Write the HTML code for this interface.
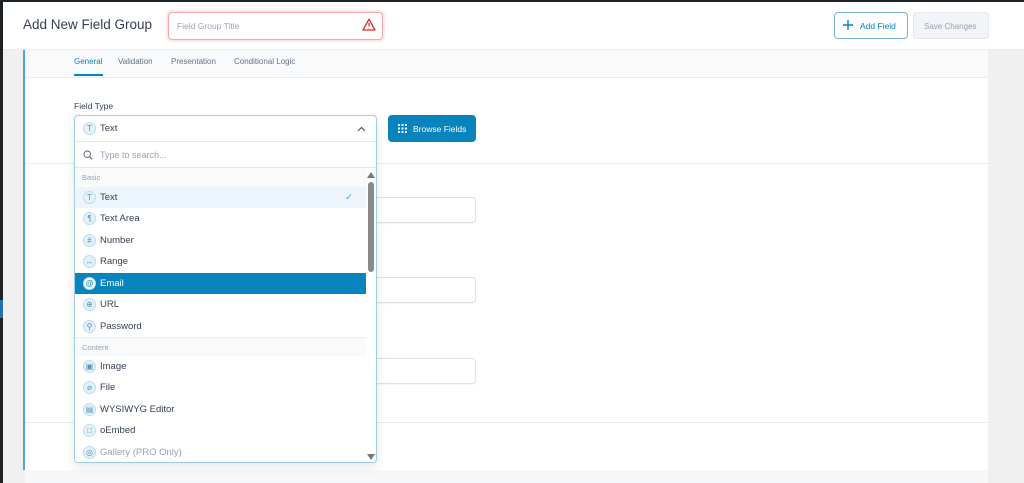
<!DOCTYPE html>
<html><head><style>
*{box-sizing:border-box;margin:0;padding:0}
body{width:1024px;height:483px;overflow:hidden;background:#f0f0f1;font-family:"Liberation Sans",sans-serif;position:relative;color:#344054}
.abs{position:absolute}
.ic{position:absolute;left:8px;top:4px;width:13px;height:13px;border-radius:50%;background:#e4f1f9;border:1px solid #bcdcee;font-size:8px;color:#5b8fb0;text-align:center;line-height:11px}
.row{position:absolute;left:0;width:291px;height:21px;font-size:9.5px;line-height:21px;padding-left:25px;color:#344054}
.lbl{position:absolute;left:0;width:291px;height:19px;font-size:7.5px;color:#98a2b3;padding-left:7px;line-height:19px;background:#f9fafb}
.inp{position:absolute;left:370px;width:106px;height:26px;border:1px solid #dde2e8;border-radius:4px;background:#fff;box-shadow:0 1px 1px rgba(0,0,0,.05)}
</style></head><body>
<div class="abs" style="left:0;top:0;width:1024px;height:2px;background:#1d2327"></div>
<div class="abs" style="left:0;top:0;width:3px;height:483px;background:#1d2327"></div>
<div class="abs" style="left:0;top:300px;width:3px;height:18px;background:#2271b1"></div>
<!-- header -->
<div class="abs" style="left:3px;top:2px;width:1021px;height:48px;background:#fff;border-bottom:1px solid #eaecf0"></div>
<div class="abs" style="left:23px;top:17px;font-size:13.5px;color:#344054;white-space:nowrap">Add New Field Group</div>
<div class="abs" style="left:168px;top:12px;width:215px;height:28px;border:1px solid #f0a8a8;border-radius:4px;box-shadow:0 0 0 2px #fde8e8;background:#fff"></div>
<div class="abs" style="left:177px;top:21px;font-size:8.5px;color:#98a2b3">Field Group Title</div>
<svg class="abs" style="left:362px;top:18px" width="14" height="13" viewBox="0 0 14 13"><path d="M7 1.2L13 12H1z" fill="none" stroke="#d92d20" stroke-width="1.3" stroke-linejoin="round"/><path d="M7 5v3.5M7 10v.4" stroke="#d92d20" stroke-width="1.3"/></svg>
<div class="abs" style="left:834px;top:12px;width:74px;height:27px;border:1px solid #74b3d6;border-radius:4px;background:#fff"></div>
<svg class="abs" style="left:843px;top:20px" width="10" height="10"><path d="M5 0v10M0 5h10" stroke="#0783be" stroke-width="1.4"/></svg>
<div class="abs" style="left:860px;top:21px;font-size:8.5px;color:#0783be">Add Field</div>
<div class="abs" style="left:913px;top:12px;width:76px;height:27px;border:1px solid #e4e7ec;border-radius:4px;background:#f2f4f7"></div>
<div class="abs" style="left:924px;top:22px;font-size:8px;color:#98a2b3">Save Changes</div>
<!-- panel -->
<div class="abs" style="left:23px;top:50px;width:2px;height:420px;background:#4fa4d8"></div>
<div class="abs" style="left:25px;top:50px;width:963px;height:420px;background:#fff"></div>
<div class="abs" style="left:25px;top:50px;width:963px;height:28px;background:#f9fafb;border-bottom:1px solid #eaecf0"></div>
<div class="abs" style="left:74px;top:57px;font-size:8px;color:#0783be">General</div>
<div class="abs" style="left:74px;top:74px;width:29px;height:2px;background:#0783be"></div>
<div class="abs" style="left:118px;top:57px;font-size:8px;color:#667085">Validation</div>
<div class="abs" style="left:171px;top:57px;font-size:8px;color:#667085">Presentation</div>
<div class="abs" style="left:234px;top:57px;font-size:8px;color:#667085">Conditional Logic</div>
<div class="abs" style="left:25px;top:163px;width:963px;height:1px;background:#eaecf0"></div>
<div class="abs" style="left:25px;top:422px;width:963px;height:1px;background:#eaecf0"></div>
<div class="abs" style="left:25px;top:470px;width:963px;height:13px;background:#f6f7f8"></div>
<div class="abs" style="left:74px;top:101px;font-size:8.5px;color:#344054">Field Type</div>
<div class="inp" style="top:197px"></div>
<div class="inp" style="top:277px"></div>
<div class="inp" style="top:358px"></div>
<div class="abs" style="left:388px;top:115px;width:88px;height:27px;background:#0783be;border-radius:4px"></div>
<svg class="abs" style="left:398px;top:124px" width="9" height="9"><g fill="#fff"><rect x="0" y="0" width="2" height="2"/><rect x="3.5" y="0" width="2" height="2"/><rect x="7" y="0" width="2" height="2"/><rect x="0" y="3.5" width="2" height="2"/><rect x="3.5" y="3.5" width="2" height="2"/><rect x="7" y="3.5" width="2" height="2"/><rect x="0" y="7" width="2" height="2"/><rect x="3.5" y="7" width="2" height="2"/><rect x="7" y="7" width="2" height="2"/></g></svg>
<div class="abs" style="left:413px;top:124px;font-size:8.5px;color:#fff">Browse Fields</div>
<!-- dropdown -->
<div class="abs" style="left:74px;top:115px;width:303px;height:348px;background:#fff;border:1px solid #9fcde6;border-radius:4px;box-shadow:0 4px 10px rgba(0,0,0,.1);overflow:hidden">
 <div class="abs" style="left:0;top:0;width:301px;height:26px;border-bottom:1px solid #dbe9f2">
  <div class="ic" style="top:6px">T</div>
  <div class="abs" style="left:25px;top:7px;font-size:9.5px">Text</div>
  <svg class="abs" style="left:282px;top:10px" width="9" height="6"><path d="M1 5L4.5 1.5L8 5" fill="none" stroke="#555" stroke-width="1.2"/></svg>
 </div>
 <div class="abs" style="left:0;top:26px;width:301px;height:26px;border-bottom:1px solid #e4e7ec">
  <svg class="abs" style="left:8px;top:8px" width="10" height="10"><circle cx="4.2" cy="4.2" r="3.3" fill="none" stroke="#667085" stroke-width="1.1"/><path d="M6.6 6.6L9.3 9.3" stroke="#667085" stroke-width="1.1"/></svg>
  <div class="abs" style="left:25px;top:8px;font-size:9px;color:#98a2b3">Type to search...</div>
 </div>
 <div class="abs" style="left:0;top:52px;width:301px;height:296px">
  <div class="lbl" style="top:0">Basic</div>
  <div class="row" style="top:19px;background:#ebf5fb"><div class="ic">T</div>Text<span style="position:absolute;left:270px;color:#4fa4d8">✓</span></div>
  <div class="row" style="top:40px"><div class="ic">¶</div>Text Area</div>
  <div class="row" style="top:62px"><div class="ic">#</div>Number</div>
  <div class="row" style="top:83px"><div class="ic">↔</div>Range</div>
  <div class="row" style="top:105px;background:#0783be;color:#fff"><div class="ic" style="background:#fff;color:#0783be">@</div>Email</div>
  <div class="row" style="top:126px"><div class="ic">⊕</div>URL</div>
  <div class="row" style="top:148px"><div class="ic">⚲</div>Password</div>
  <div class="lbl" style="top:169px;border-top:1px solid #eaecf0">Content</div>
  <div class="row" style="top:188px"><div class="ic">▣</div>Image</div>
  <div class="row" style="top:209px"><div class="ic">⌀</div>File</div>
  <div class="row" style="top:231px"><div class="ic">▤</div>WYSIWYG Editor</div>
  <div class="row" style="top:252px"><div class="ic">□</div>oEmbed</div>
  <div class="row" style="top:274px;color:#98a2b3"><div class="ic">◎</div>Gallery (PRO Only)</div>
  <div class="abs" style="left:291px;top:0;width:10px;height:296px;background:#fff"></div>
  <svg class="abs" style="left:292px;top:4px" width="8" height="6"><path d="M0 6L4 0L8 6z" fill="#777"/></svg>
  <div class="abs" style="left:293px;top:14px;width:6px;height:90px;border-radius:3px;background:#8a8a8a"></div>
  <svg class="abs" style="left:292px;top:286px" width="8" height="6"><path d="M0 0L4 6L8 0z" fill="#777"/></svg>
 </div>
</div>
</body></html>
